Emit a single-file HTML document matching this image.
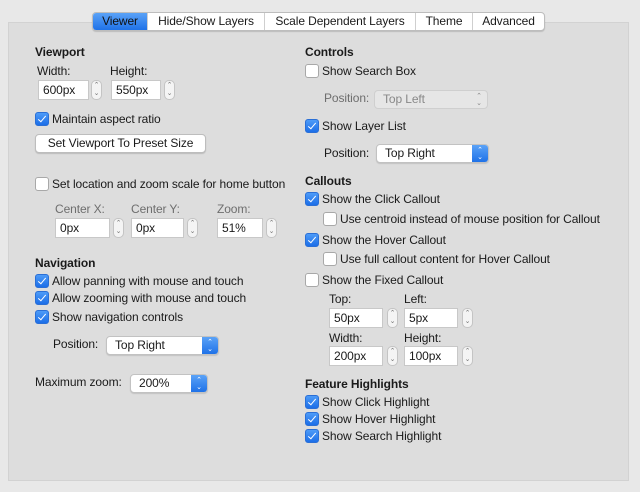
<!DOCTYPE html>
<html><head><style>
*{box-sizing:border-box;margin:0;padding:0}
body{width:640px;height:492px;background:#e8e8e8;font-family:"Liberation Sans",sans-serif;font-size:12px;letter-spacing:-0.1px;color:#1a1a1a;position:relative;overflow:hidden}
.panel{position:absolute;left:8px;top:22px;width:621px;height:459px;background:#dddddd;border:1px solid #d2d2d2}
.a{position:absolute;white-space:nowrap;line-height:14px}
.b{font-weight:bold}
.g{color:#6e6e6e}
.tabs{position:absolute;left:92px;top:12px;height:19px;display:flex;background:#fff;border:1px solid #bdbdbd;border-radius:4px;box-shadow:0 1px 1px rgba(0,0,0,.15);overflow:hidden}
.tabs div{height:17px;line-height:17px;text-align:center;border-right:1px solid #cfcfcf;font-size:12px}
.tabs div:last-child{border-right:none}
.tabs .on{background:linear-gradient(#5aa2f7,#1f72e8);color:#111}
.cb{position:absolute;width:14px;height:14px;border-radius:3px;background:#fff;border:1px solid #a8a8a8}
.cb.c{background:linear-gradient(#4d9bf8,#1c6ee8);border-color:#2a6fd6}
.cb.c::after{content:"";position:absolute;left:4px;top:1px;width:3px;height:7px;border:solid #fff;border-width:0 1.6px 1.6px 0;transform:rotate(40deg)}
.in{position:absolute;background:#fff;border:1px solid #c8c8c8;height:20px;line-height:18px;padding-left:4px}
.st{position:absolute;width:11px;height:20px;border:1px solid #c4c4c4;border-radius:5px;background:#f4f4f4;font-size:7px;line-height:8px;text-align:center;color:#777;padding-top:1px}
.sel{position:absolute;height:19px;background:#fff;border:1px solid #c2c2c2;border-radius:4px;line-height:17px;padding-left:8px;box-shadow:0 1px 1px rgba(0,0,0,.12);overflow:hidden}
.sel .ar{position:absolute;right:0;top:0;width:16px;height:17px;background:linear-gradient(#5aa2f7,#1f72e8);color:#fff;font-size:7px;line-height:7px;text-align:center;padding-top:2px}
.sel.d{background:#e6e6e6;color:#888;border-color:#cfcfcf;box-shadow:none}
.sel.d .ar{background:none;color:#888}
.btn{position:absolute;background:#fff;border:1px solid #bdbdbd;border-radius:4px;height:19px;line-height:17px;text-align:center;box-shadow:0 1px 1px rgba(0,0,0,.15)}
</style></head><body>
<div class="panel"></div>
<div class="tabs">
<div class="on" style="width:55px">Viewer</div>
<div style="width:117px">Hide/Show Layers</div>
<div style="width:151px">Scale Dependent Layers</div>
<div style="width:57px">Theme</div>
<div style="width:71px">Advanced</div>
</div>

<div class="a b" style="left:35px;top:45px">Viewport</div>
<div class="a" style="left:37px;top:64px">Width:</div>
<div class="a" style="left:110px;top:64px">Height:</div>
<div class="in" style="left:38px;top:80px;width:51px">600px</div>
<div class="st" style="left:91px;top:80px">⌃<br>⌄</div>
<div class="in" style="left:111px;top:80px;width:50px">550px</div>
<div class="st" style="left:164px;top:80px">⌃<br>⌄</div>
<div class="cb c" style="left:35px;top:112px"></div><div class="a" style="left:52px;top:112px">Maintain aspect ratio</div>
<div class="btn" style="left:35px;top:134px;width:171px">Set Viewport To Preset Size</div>

<div class="cb" style="left:35px;top:177px"></div><div class="a" style="left:52px;top:177px">Set location and zoom scale for home button</div>
<div class="a g" style="left:55px;top:202px">Center X:</div>
<div class="a g" style="left:131px;top:202px">Center Y:</div>
<div class="a g" style="left:217px;top:202px">Zoom:</div>
<div class="in" style="left:55px;top:218px;width:55px">0px</div><div class="st" style="left:113px;top:218px">⌃<br>⌄</div>
<div class="in" style="left:131px;top:218px;width:53px">0px</div><div class="st" style="left:187px;top:218px">⌃<br>⌄</div>
<div class="in" style="left:217px;top:218px;width:46px">51%</div><div class="st" style="left:266px;top:218px">⌃<br>⌄</div>

<div class="a b" style="left:35px;top:256px">Navigation</div>
<div class="cb c" style="left:35px;top:274px"></div><div class="a" style="left:52px;top:274px">Allow panning with mouse and touch</div>
<div class="cb c" style="left:35px;top:291px"></div><div class="a" style="left:52px;top:291px">Allow zooming with mouse and touch</div>
<div class="cb c" style="left:35px;top:310px"></div><div class="a" style="left:52px;top:310px">Show navigation controls</div>
<div class="a" style="left:53px;top:337px">Position:</div>
<div class="sel" style="left:106px;top:336px;width:113px">Top Right<div class="ar">⌃<br>⌄</div></div>
<div class="a" style="left:35px;top:375px">Maximum zoom:</div>
<div class="sel" style="left:130px;top:374px;width:78px">200%<div class="ar">⌃<br>⌄</div></div>

<div class="a b" style="left:305px;top:45px">Controls</div>
<div class="cb" style="left:305px;top:64px"></div><div class="a" style="left:322px;top:64px">Show Search Box</div>
<div class="a g" style="left:324px;top:91px">Position:</div>
<div class="sel d" style="left:374px;top:90px;width:114px">Top Left<div class="ar">⌃<br>⌄</div></div>
<div class="cb c" style="left:305px;top:119px"></div><div class="a" style="left:322px;top:119px">Show Layer List</div>
<div class="a" style="left:324px;top:146px">Position:</div>
<div class="sel" style="left:376px;top:144px;width:113px">Top Right<div class="ar">⌃<br>⌄</div></div>

<div class="a b" style="left:305px;top:174px">Callouts</div>
<div class="cb c" style="left:305px;top:192px"></div><div class="a" style="left:322px;top:192px">Show the Click Callout</div>
<div class="cb" style="left:323px;top:212px"></div><div class="a" style="left:340px;top:212px">Use centroid instead of mouse position for Callout</div>
<div class="cb c" style="left:305px;top:233px"></div><div class="a" style="left:322px;top:233px">Show the Hover Callout</div>
<div class="cb" style="left:323px;top:252px"></div><div class="a" style="left:340px;top:252px">Use full callout content for Hover Callout</div>
<div class="cb" style="left:305px;top:273px"></div><div class="a" style="left:322px;top:273px">Show the Fixed Callout</div>
<div class="a" style="left:329px;top:292px">Top:</div>
<div class="a" style="left:404px;top:292px">Left:</div>
<div class="in" style="left:329px;top:308px;width:54px">50px</div><div class="st" style="left:387px;top:308px">⌃<br>⌄</div>
<div class="in" style="left:404px;top:308px;width:54px">5px</div><div class="st" style="left:462px;top:308px">⌃<br>⌄</div>
<div class="a" style="left:329px;top:331px">Width:</div>
<div class="a" style="left:404px;top:331px">Height:</div>
<div class="in" style="left:329px;top:346px;width:54px">200px</div><div class="st" style="left:387px;top:346px">⌃<br>⌄</div>
<div class="in" style="left:404px;top:346px;width:54px">100px</div><div class="st" style="left:462px;top:346px">⌃<br>⌄</div>

<div class="a b" style="left:305px;top:377px">Feature Highlights</div>
<div class="cb c" style="left:305px;top:395px"></div><div class="a" style="left:322px;top:395px">Show Click Highlight</div>
<div class="cb c" style="left:305px;top:412px"></div><div class="a" style="left:322px;top:412px">Show Hover Highlight</div>
<div class="cb c" style="left:305px;top:429px"></div><div class="a" style="left:322px;top:429px">Show Search Highlight</div>
</body></html>
